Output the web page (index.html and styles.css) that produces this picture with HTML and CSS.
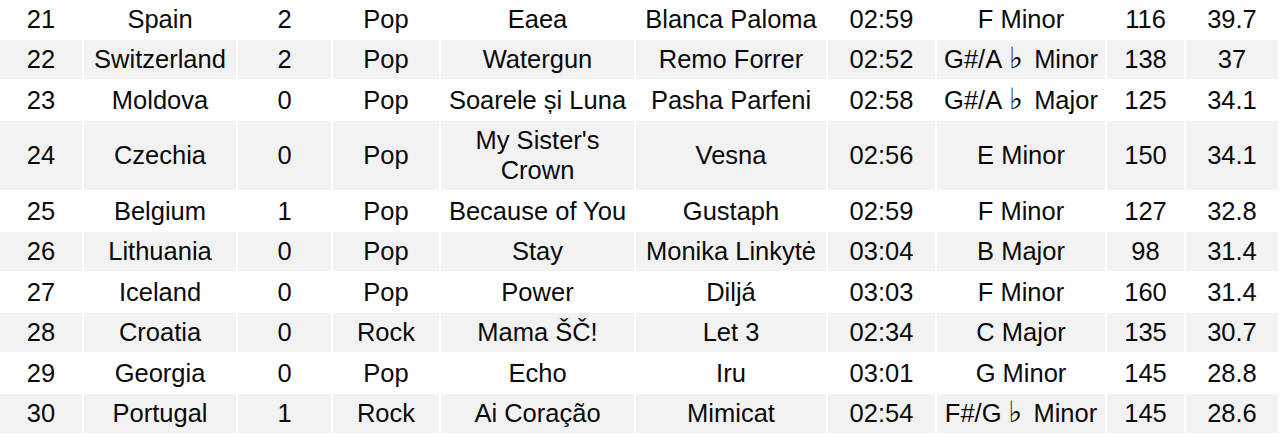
FILE: index.html
```html
<!DOCTYPE html>
<html lang="en">
<head>
<meta charset="utf-8">
<title>Eurovision 2023 songs</title>
<link rel="stylesheet" href="styles.css">
</head>
<body>
<table class="songs">
  <colgroup>
    <col class="c-rank"><col class="c-country"><col class="c-pts"><col class="c-genre"><col class="c-song"><col class="c-artist"><col class="c-dur"><col class="c-key"><col class="c-bpm"><col class="c-score">
  </colgroup>
  <tbody>
    <tr><td>21</td><td>Spain</td><td>2</td><td>Pop</td><td>Eaea</td><td>Blanca Paloma</td><td>02:59</td><td>F Minor</td><td>116</td><td>39.7</td></tr>
    <tr><td>22</td><td>Switzerland</td><td>2</td><td>Pop</td><td>Watergun</td><td>Remo Forrer</td><td>02:52</td><td>G#/A<span class="flat">♭</span> Minor</td><td>138</td><td>37</td></tr>
    <tr><td>23</td><td>Moldova</td><td>0</td><td>Pop</td><td>Soarele și Luna</td><td>Pasha Parfeni</td><td>02:58</td><td>G#/A<span class="flat">♭</span> Major</td><td>125</td><td>34.1</td></tr>
    <tr><td>24</td><td>Czechia</td><td>0</td><td>Pop</td><td>My Sister's Crown</td><td>Vesna</td><td>02:56</td><td>E Minor</td><td>150</td><td>34.1</td></tr>
    <tr><td>25</td><td>Belgium</td><td>1</td><td>Pop</td><td>Because of You</td><td>Gustaph</td><td>02:59</td><td>F Minor</td><td>127</td><td>32.8</td></tr>
    <tr><td>26</td><td>Lithuania</td><td>0</td><td>Pop</td><td>Stay</td><td>Monika Linkytė</td><td>03:04</td><td>B Major</td><td>98</td><td>31.4</td></tr>
    <tr><td>27</td><td>Iceland</td><td>0</td><td>Pop</td><td>Power</td><td>Diljá</td><td>03:03</td><td>F Minor</td><td>160</td><td>31.4</td></tr>
    <tr><td>28</td><td>Croatia</td><td>0</td><td>Rock</td><td>Mama ŠČ!</td><td>Let 3</td><td>02:34</td><td>C Major</td><td>135</td><td>30.7</td></tr>
    <tr><td>29</td><td>Georgia</td><td>0</td><td>Pop</td><td>Echo</td><td>Iru</td><td>03:01</td><td>G Minor</td><td>145</td><td>28.8</td></tr>
    <tr><td>30</td><td>Portugal</td><td>1</td><td>Rock</td><td>Ai Coração</td><td>Mimicat</td><td>02:54</td><td>F#/G<span class="flat">♭</span> Minor</td><td>145</td><td>28.6</td></tr>
  </tbody>
</table>
</body>
</html>
```
FILE: styles.css
```css
html, body {
  margin: 0;
  padding: 0;
  background: #ffffff;
}

body {
  font-family: "Liberation Sans", Arial, Helvetica, sans-serif;
  color: #0a0a0a;
  overflow: hidden;
}

.songs {
  table-layout: fixed;
  border-collapse: separate;
  border-spacing: 2px;
  width: 1282px;
  margin: -2.5px 0 0 -2px;
  font-size: 25.5px;
  line-height: 30px;
}

.songs td {
  padding: 4.25px 4px;
  text-align: center;
  vertical-align: middle;
}

.songs tr:nth-child(even) td {
  background: #f2f2f2;
}

.flat {
  display: inline-block;
  font-family: "DejaVu Sans", sans-serif;
  font-size: 1.15em;
  line-height: 1;
  margin: 0 4px 0 7px;
  color: #000000;
}

.c-rank { width: 82px; }
.c-country { width: 152px; }
.c-pts { width: 93px; }
.c-genre { width: 106px; }
.c-song { width: 193px; }
.c-artist { width: 190px; }
.c-dur { width: 107px; }
.c-key { width: 168px; }
.c-bpm { width: 77px; }
.c-score { width: 92px; }
```
